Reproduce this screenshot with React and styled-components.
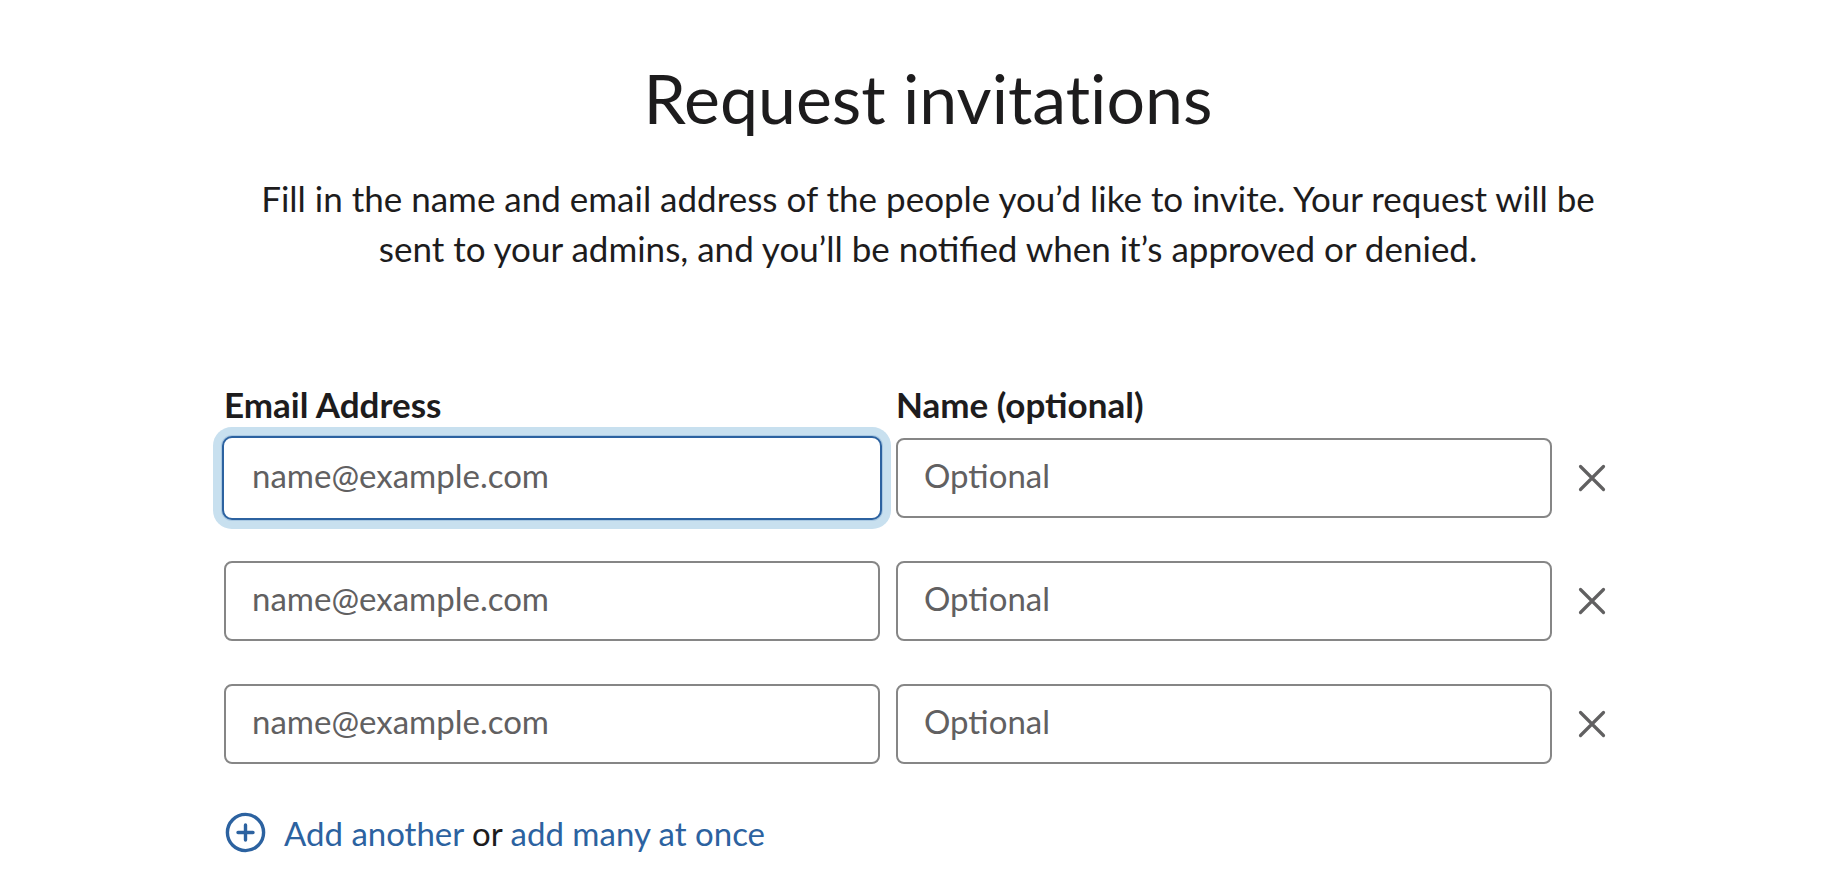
import React from "react";
import styled, { createGlobalStyle } from "styled-components";

const GlobalStyle = createGlobalStyle`
  *, *::before, *::after { box-sizing: border-box; }
  body {
    margin: 0;
    background: #fff;
    color: #1d1c1d;
    font-family: Lato, "Liberation Sans", sans-serif;
  }
`;

const Page = styled.main`
  padding: 60px 212px 0 224px;
`;

const Header = styled.header`
  text-align: center;
`;

const Title = styled.h1`
  margin: 0;
  font-size: 68px;
  line-height: 76px;
  font-weight: 400;
  font-variant-ligatures: none;
`;

const Intro = styled.p`
  margin: 37px 0 0;
  padding: 0 16px;
  font-size: 35px;
  line-height: 50px;
`;

const Form = styled.form`
  display: flex;
  flex-direction: column;
  gap: 45px;
  margin-top: 109px;
`;

const Rows = styled.div`
  display: grid;
  grid-template-columns: 1fr 1fr 64px;
  column-gap: 16px;
  row-gap: 43px;
  align-items: center;
`;

const Label = styled.label`
  margin-bottom: -31px;
  font-size: 35px;
  line-height: 44px;
  font-weight: 700;
  grid-column: ${(p) => p.$column};
`;

const Field = styled.input`
  width: 100%;
  height: 80px;
  padding: 0 26px 6px;
  border: 2px solid #868686;
  border-radius: 8px;
  background: #fff;
  color: #1d1c1d;
  font: inherit;
  font-size: 33px;
  outline: none;

  &::placeholder { color: #616061; opacity: 1; }
  &:focus {
    border-color: #fff;
    box-shadow: 0 0 0 2px #2c62a0, 0 0 0 3px #a9c8e2, 0 0 0 11px #c8e0ef;
  }
`;

const RemoveButton = styled.button`
  display: flex;
  align-items: center;
  justify-content: center;
  width: 48px;
  height: 48px;
  padding: 0;
  border: 0;
  background: none;
  color: #616061;
  cursor: pointer;
`;

const Actions = styled.div`
  display: flex;
  align-items: center;
  gap: 16px;
  color: #2c62a0;
`;

const ActionText = styled.p`
  margin: 0;
  color: #1d1c1d;
  font-size: 33px;
  line-height: 48px;
`;

const ActionLink = styled.a`
  color: #2c62a0;
  text-decoration: none;
`;

const rows = [1, 2, 3];

export default function App() {
  return (
    <>
      <GlobalStyle />
      <Page>
        <Header>
          <Title>Request invitations</Title>
          <Intro>
            Fill in the name and email address of the people you’d like to invite. Your request will be
            sent to your admins, and you’ll be notified when it’s approved or denied.
          </Intro>
        </Header>
        <Form>
          <Rows>
            <Label $column="1" htmlFor="email-1">Email Address</Label>
            <Label $column="2 / 4" htmlFor="name-1">Name (optional)</Label>
            {rows.map((n) => (
              <React.Fragment key={n}>
                <Field id={`email-${n}`} type="email" placeholder="name@example.com" aria-label={n > 1 ? "Email Address" : undefined} autoFocus={n === 1} />
                <Field id={`name-${n}`} type="text" placeholder="Optional" aria-label={n > 1 ? "Name (optional)" : undefined} />
                <RemoveButton type="button" aria-label="Remove row">
                  <svg width="28" height="28" viewBox="0 0 28 28" fill="none" stroke="currentColor" strokeWidth="3.2" strokeLinecap="round">
                    <path d="M2.5 2.5L25.5 25.5M25.5 2.5L2.5 25.5" />
                  </svg>
                </RemoveButton>
              </React.Fragment>
            ))}
          </Rows>
          <Actions>
            <svg width="44" height="44" viewBox="0 0 44 44" fill="none" stroke="currentColor" strokeWidth="3.4" strokeLinecap="round" aria-hidden="true">
              <circle cx="21.5" cy="21.5" r="18.1" />
              <path d="M21.5 14V29M14 21.5H29" />
            </svg>
            <ActionText>
              <ActionLink href="#add">Add another</ActionLink> or <ActionLink href="#many">add many at once</ActionLink>
            </ActionText>
          </Actions>
        </Form>
      </Page>
    </>
  );
}
